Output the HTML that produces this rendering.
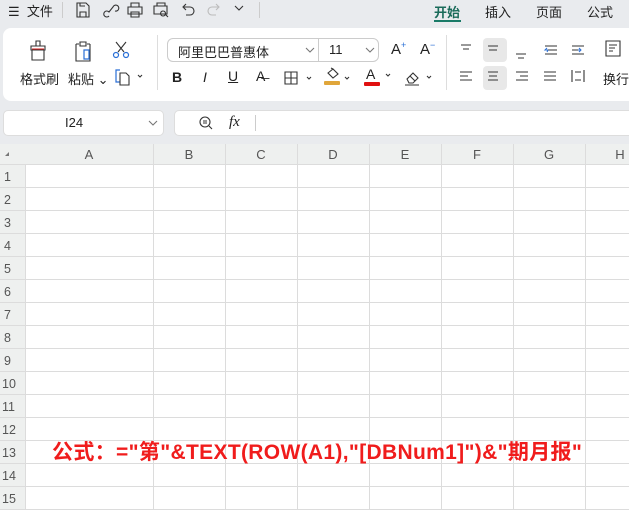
<!DOCTYPE html>
<html><head><meta charset="utf-8"><style>
*{margin:0;padding:0;box-sizing:border-box}
body{width:629px;height:508px;overflow:hidden;background:#e9ebee;font-family:"Liberation Sans","Noto Sans CJK SC",sans-serif;position:relative;color:#333}
.a{position:absolute}
.t{font-size:13px;color:#222;white-space:nowrap}
svg{position:absolute;overflow:visible}
.ic{fill:none;stroke:#333;stroke-width:1.1}
</style></head><body>
<!-- top bar -->
<div class="a t" style="left:8px;top:1px">☰&nbsp;&nbsp;文件</div>
<div class="a" style="left:62px;top:2px;width:1px;height:16px;background:#ccc"></div>
<svg style="left:75px;top:2px" width="16" height="16"><path class="ic" d="M2 1h9l3 3v11H2z M5 15v-5h6v5 M5 1v3h5"/></svg>
<svg style="left:103px;top:2px" width="16" height="16"><path class="ic" d="M6 14a3 3 0 1 1 0-4l4-5a3 3 0 1 1 2 4"/></svg>
<svg style="left:127px;top:2px" width="16" height="16"><path class="ic" d="M4 5V1h8v4 M1 5h14v7H1z M4 10h8v5H4z"/></svg>
<svg style="left:153px;top:2px" width="16" height="16"><path class="ic" d="M4 4V1h8v3 M1 4h13v8H1z M10 9a2.5 2.5 0 1 0 .1 0 M12 12l3 3"/></svg>
<svg style="left:181px;top:2px" width="14" height="16"><path class="ic" d="M3 5h6a4 4 0 0 1 0 8H5 M5 2L2 5l3 3"/></svg>
<svg style="left:207px;top:2px" width="14" height="16"><path class="ic" style="stroke:#bbb" d="M11 5H5a4 4 0 0 0 0 8h4 M9 2l3 3-3 3"/></svg>
<svg style="left:234px;top:5px" width="10" height="8"><path class="ic" d="M1 1l4 4 4-4"/></svg>
<div class="a" style="left:259px;top:2px;width:1px;height:16px;background:#ccc"></div>
<div class="a t" style="left:434px;top:2px;font-weight:bold;color:#1a6b5a">开始</div>
<div class="a" style="left:434px;top:20px;width:27px;height:2px;background:#1a7b68"></div>
<div class="a t" style="left:485px;top:2px">插入</div>
<div class="a t" style="left:536px;top:2px">页面</div>
<div class="a t" style="left:587px;top:2px">公式</div>
<!-- ribbon -->
<div class="a" style="left:3px;top:28px;width:640px;height:73px;background:#fff;border-radius:8px"></div>
<svg style="left:28px;top:40px" width="20" height="22"><path class="ic" d="M8 6V1h4v5 M3 6h14v4H3z M4 10v10h12V10" /><path d="M4 9h12" stroke="#d22" stroke-width="1"/></svg>
<div class="a t" style="left:20px;top:69px">格式刷</div>
<svg style="left:75px;top:40px" width="20" height="22"><path class="ic" d="M1 4h3 M12 4h3 M1 4v17h14V4 M5 2h6v4H5z"/><path d="M9 10h5v9H9z" fill="none" stroke="#2a6fd6" stroke-width="1.2"/></svg>
<div class="a t" style="left:68px;top:69px">粘贴 ⌄</div>
<svg style="left:112px;top:41px" width="18" height="18"><path class="ic" d="M4 1l8 10 M14 1L6 11"/><circle cx="4" cy="14" r="2.5" fill="none" stroke="#2a6fd6" stroke-width="1.2"/><circle cx="14" cy="14" r="2.5" fill="none" stroke="#2a6fd6" stroke-width="1.2"/></svg>
<svg style="left:115px;top:69px" width="28" height="18"><path d="M5 1H1v12h4" fill="none" stroke="#2a6fd6" stroke-width="1.2"/><path class="ic" d="M5 4h6l3 3v9H5z M23 6l2 2 2-2"/></svg>
<div class="a" style="left:157px;top:35px;width:1px;height:55px;background:#ddd"></div>
<div class="a" style="left:167px;top:38px;width:212px;height:24px;border:1px solid #ccc;border-radius:6px"></div>
<div class="a" style="left:318px;top:38px;width:1px;height:24px;background:#ccc"></div>
<div class="a t" style="left:178px;top:42px">阿里巴巴普惠体</div>
<svg style="left:305px;top:47px" width="10" height="6"><path class="ic" style="stroke:#777" d="M1 1l4 4 4-4"/></svg>
<div class="a t" style="left:329px;top:42px">11</div>
<svg style="left:365px;top:47px" width="10" height="6"><path class="ic" style="stroke:#777" d="M1 1l4 4 4-4"/></svg>
<div class="a t" style="left:391px;top:40px;font-size:15px">A<sup style="font-size:9px;color:#2a6fd6">+</sup></div>
<div class="a t" style="left:420px;top:40px;font-size:15px">A<sup style="font-size:9px;color:#2a6fd6">−</sup></div>
<div class="a t" style="left:172px;top:69px;font-weight:bold;font-size:14px">B</div>
<div class="a t" style="left:203px;top:69px;font-style:italic;font-size:14px">I</div>
<div class="a t" style="left:228px;top:68px;text-decoration:underline;font-size:14px">U</div>
<div class="a t" style="left:256px;top:68px;font-size:14px">A̶</div>
<svg style="left:284px;top:71px" width="30" height="14"><path class="ic" d="M1 1h12v12H1z M7 1v12 M1 7h12 M23 6l2 2 2-2"/></svg>
<svg style="left:324px;top:68px" width="30" height="18"><path class="ic" d="M4 5l5-4 5 5-5 4z M9 1l-2-1 M21 9l2 2 2-2"/><rect x="0" y="13" width="16" height="4" rx="1" fill="#e0a63a"/></svg>
<div class="a t" style="left:366px;top:66px;font-size:14px">A</div>
<div class="a" style="left:364px;top:82px;width:16px;height:4px;background:#e01010;border-radius:1px"></div>
<svg style="left:385px;top:73px" width="6" height="4"><path class="ic" d="M1 1l2 2 2-2"/></svg>
<svg style="left:404px;top:70px" width="30" height="16"><path class="ic" d="M3 9l6-6 5 5-5 5H5z M6 6l5 5 M1 15h14 M23 6l2 2 2-2"/></svg>
<div class="a" style="left:446px;top:35px;width:1px;height:55px;background:#ddd"></div>
<div class="a" style="left:483px;top:38px;width:24px;height:24px;background:#e8e8e8;border-radius:4px"></div>
<div class="a" style="left:483px;top:66px;width:24px;height:24px;background:#e8e8e8;border-radius:4px"></div>
<svg style="left:460px;top:44px" width="160" height="40">
<path class="ic" d="M1 1h10 M3 5h6 M28 2h10 M29 6h8 M56 10h10 M58 14h6 M85 2h12 M88 6h9 M85 10h12 M112 2h12 M112 6h9 M112 10h12"/>
<path d="M88 6l-3 0 2-2 M88 6l-1 2 M118 6l3 0 M119 4l2 2-2 2" fill="none" stroke="#2a6fd6" stroke-width="1"/>
<path class="ic" d="M0 28h12 M0 32h8 M0 36h12 M28 28h10 M29 32h8 M28 36h10 M56 28h12 M60 32h8 M56 36h12 M84 28h12 M84 32h12 M84 36h12 M112 26v12 M124 26v12 M115 28h6 M115 36h6"/>
<path class="ic" d="M146 -3h14v15h-14z M149 1h8 M149 4h6 M149 7h4"/>
</svg>
<div class="a t" style="left:603px;top:69px">换行</div>
<!-- name box / formula -->
<div class="a" style="left:3px;top:110px;width:161px;height:26px;background:#fff;border-radius:5px;border:1px solid #ddd"></div>
<div class="a t" style="left:65px;top:115px">I24</div>
<svg style="left:148px;top:120px" width="10" height="6"><path class="ic" style="stroke:#777" d="M1 1l4 4 4-4"/></svg>
<div class="a" style="left:174px;top:110px;width:470px;height:26px;background:#fff;border-radius:5px;border:1px solid #ddd"></div>
<svg style="left:198px;top:115px" width="16" height="16"><circle cx="7" cy="7" r="5" class="ic"/><path class="ic" d="M5 6h4 M5 8h4 M11 11l3 3"/></svg>
<div class="a t" style="left:229px;top:114px;font-family:'Liberation Serif',serif;font-style:italic;font-size:15px">fx</div>
<div class="a" style="left:255px;top:115px;width:1px;height:16px;background:#ccc"></div>
<!-- grid -->
<svg style="left:0;top:144px" width="629" height="366">
<rect x="25" y="20" width="604" height="346" fill="#fff"/>
<rect x="0" y="0" width="629" height="20" fill="#eef0ef"/>
<rect x="0" y="0" width="25" height="366" fill="#eef0ef"/>
<path d="M5 12l4-4v4z" fill="#777"/>
<g stroke="#dcdcdc" stroke-width="1">
<path d="M25.5 20v346 M153.5 0v366 M225.5 0v366 M297.5 0v366 M369.5 0v366 M441.5 0v366 M513.5 0v366 M585.5 0v366"/>
<path d="M0 20.5h629 M0 43.5h629 M0 66.5h629 M0 89.5h629 M0 112.5h629 M0 135.5h629 M0 158.5h629 M0 181.5h629 M0 204.5h629 M0 227.5h629 M0 250.5h629 M0 273.5h629 M0 296.5h629 M0 319.5h629 M0 342.5h629 M0 365.5h629"/>
</g>
<g font-family="Liberation Sans,sans-serif" font-size="13" fill="#555" text-anchor="middle">
<text x="89" y="15">A</text><text x="189" y="15">B</text><text x="261" y="15">C</text><text x="333" y="15">D</text><text x="405" y="15">E</text><text x="477" y="15">F</text><text x="549" y="15">G</text><text x="620" y="15">H</text>
</g>
<g font-family="Liberation Sans,sans-serif" font-size="12.5" fill="#555">
<text x="4" y="37">1</text><text x="4" y="60">2</text><text x="4" y="83">3</text><text x="4" y="106">4</text><text x="4" y="129">5</text><text x="4" y="152">6</text><text x="4" y="175">7</text><text x="4" y="198">8</text><text x="4" y="221">9</text><text x="2" y="244">10</text><text x="2" y="267">11</text><text x="2" y="290">12</text><text x="2" y="313">13</text><text x="2" y="336">14</text><text x="2" y="359">15</text>
</g>
</svg>
<div class="a" style="left:52px;top:436px;font-size:21px;font-weight:bold;color:#f01c1c;white-space:nowrap;letter-spacing:0.33px">公式：="第"&amp;TEXT(ROW(A1),"[DBNum1]")&amp;"期月报"</div>
</body></html>
